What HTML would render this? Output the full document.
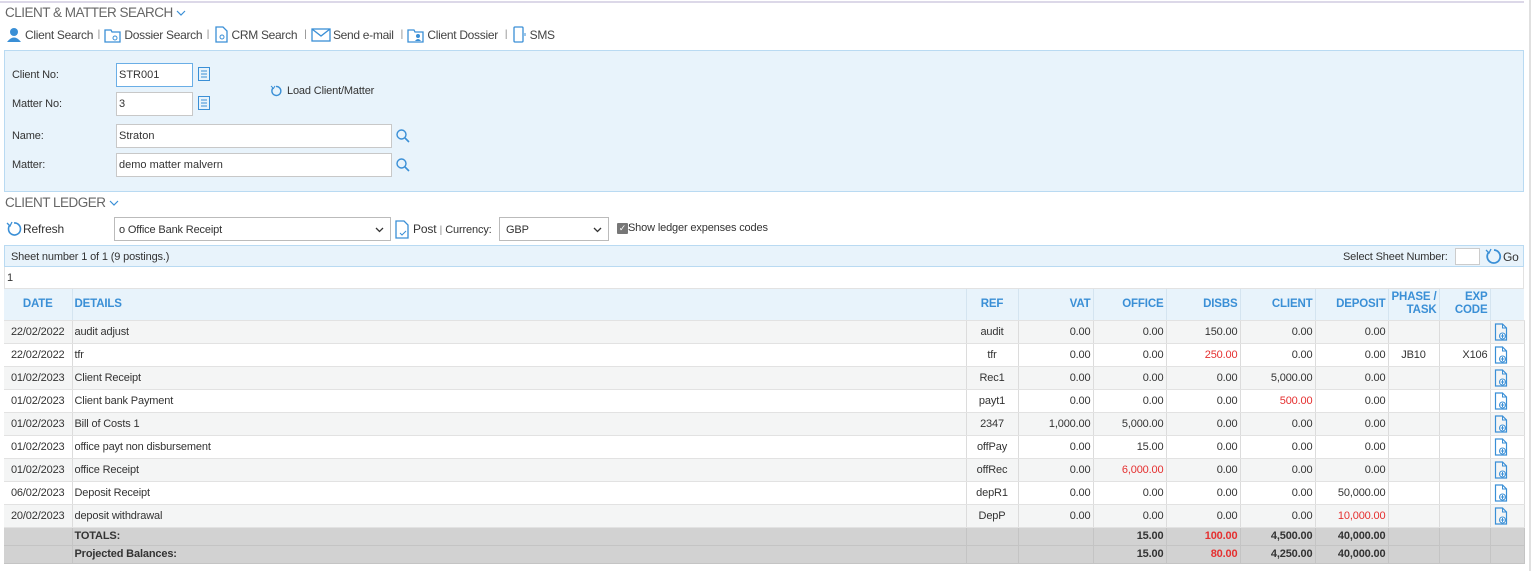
<!DOCTYPE html>
<html><head><meta charset="utf-8"><style>
*{box-sizing:border-box;margin:0;padding:0}
body{width:1536px;height:571px;background:#fff;font-family:"Liberation Sans",sans-serif;font-size:11px;color:#333;position:relative;overflow:hidden;letter-spacing:-0.15px}
.a{position:absolute}
.h{font-size:13.5px;color:#666;letter-spacing:-0.5px}
.chev{display:inline-block;vertical-align:middle;margin-left:3px}
.lnk{font-size:12px;color:#444;white-space:nowrap;letter-spacing:-0.3px}
.sep{color:#888;font-size:10px}
input.t{position:absolute;border:1px solid #c8c8c8;background:#fff;height:24px;font:11px "Liberation Sans",sans-serif;padding-left:2px;color:#333}
table{border-collapse:collapse;table-layout:fixed;position:absolute;left:4px;top:289px;width:1520px}
td,th{border-right:1px solid #dcdcdc;border-bottom:1px solid #e2e2e2;height:23px;padding:0 2px;text-align:right;white-space:nowrap;font-size:11px}
th{height:31px;color:#3a8fd6;font-size:11.5px;background:#e8f3fb;border-right:1px solid #d4e4f0;line-height:13px}
tr.g td{background:#f4f5f5}
tr.tot td{background:#d2d2d2;height:18px;font-weight:bold;border-color:#c4c4c4}
.r{color:#e53030}
.l{text-align:left}
.c{text-align:center}
</style></head><body>
<div class="a" style="left:0;top:0;width:1524px;height:3px;border-bottom:2px solid #dcd8e8"></div>
<div class="a" style="left:1529px;top:0;width:2px;height:571px;background:#e0e0e0"></div>

<div class="a h" style="left:5px;top:5px">CLIENT &amp; MATTER SEARCH<svg class="chev" width="10" height="8"><path d="M1 2l4 4 4-4" fill="none" stroke="#3a8fd6" stroke-width="1.2"/></svg></div>
<div class="a lnk" style="left:6px;top:26px;display:flex;align-items:center;gap:2px">
<svg width="17" height="16"><circle cx="8" cy="5" r="4" fill="#3a8fd6"/><path d="M1 15 Q8 6 15 15Z" fill="#3a8fd6"/></svg>Client Search <span class="sep">&nbsp;|&nbsp;</span>
<svg width="18" height="16"><path d="M1 3h6l1 2h8v10H1z" fill="none" stroke="#3a8fd6" stroke-width="1.3"/><circle cx="11" cy="11" r="2" fill="none" stroke="#3a8fd6"/></svg>Dossier Search <span class="sep">&nbsp;|&nbsp;</span>
<svg width="16" height="17"><path d="M2 1h7l4 4v11H2z" fill="none" stroke="#3a8fd6" stroke-width="1.3"/><circle cx="8" cy="11" r="2" fill="none" stroke="#3a8fd6"/></svg>CRM Search <span class="sep">&nbsp;&nbsp;|&nbsp;</span>
<svg width="20" height="15"><rect x="1" y="2" width="18" height="12" fill="none" stroke="#3a8fd6" stroke-width="1.3"/><path d="M1 2l9 7 9-7" fill="none" stroke="#3a8fd6" stroke-width="1.3"/></svg>Send e-mail <span class="sep">&nbsp;&nbsp;|&nbsp;</span>
<svg width="18" height="16"><path d="M1 3h6l1 2h8v10H1z" fill="none" stroke="#3a8fd6" stroke-width="1.3"/><circle cx="11" cy="9" r="2" fill="#3a8fd6"/><path d="M8 14q3-4 6 0z" fill="#3a8fd6"/></svg>Client Dossier <span class="sep">&nbsp;&nbsp;|&nbsp;</span>
<svg width="16" height="17"><rect x="2" y="1" width="9" height="15" rx="1" fill="none" stroke="#3a8fd6" stroke-width="1.3"/><path d="M13 7v3" stroke="#3a8fd6"/></svg>SMS
</div>

<div class="a" style="left:4px;top:50px;width:1520px;height:142px;background:#e8f3fb;border:1px solid #b9daf2"></div>
<div class="a" style="left:12px;top:69px">Client No:</div>
<div class="a" style="left:12px;top:98px">Matter No:</div>
<div class="a" style="left:12px;top:130px">Name:</div>
<div class="a" style="left:12px;top:159px">Matter:</div>
<input class="t" style="left:116px;top:63px;width:77px;border-color:#6aaee6" value="STR001">
<input class="t" style="left:116px;top:92px;width:77px" value="3">
<input class="t" style="left:116px;top:124px;width:276px" value="Straton">
<input class="t" style="left:116px;top:153px;width:276px" value="demo matter malvern">
<svg class="a" style="left:198px;top:67px" width="12" height="14"><rect x="0.5" y="0.5" width="11" height="13" fill="none" stroke="#3a8fd6"/><path d="M3 4h6M3 7h6M3 10h6" stroke="#3a8fd6"/></svg>
<svg class="a" style="left:198px;top:96px" width="12" height="14"><rect x="0.5" y="0.5" width="11" height="13" fill="none" stroke="#3a8fd6"/><path d="M3 4h6M3 7h6M3 10h6" stroke="#3a8fd6"/></svg>
<svg class="a" style="left:396px;top:129px" width="14" height="14"><circle cx="5.5" cy="5.5" r="4.5" fill="none" stroke="#3a8fd6" stroke-width="1.4"/><path d="M9 9l4 4" stroke="#3a8fd6" stroke-width="1.6"/></svg>
<svg class="a" style="left:396px;top:158px" width="14" height="14"><circle cx="5.5" cy="5.5" r="4.5" fill="none" stroke="#3a8fd6" stroke-width="1.4"/><path d="M9 9l4 4" stroke="#3a8fd6" stroke-width="1.6"/></svg>
<div class="a" style="left:270px;top:85px;display:flex;align-items:center;gap:5px"><svg width="12" height="12"><path d="M3 3A4.5 4.5 0 1 0 6 1.5" fill="none" stroke="#3a8fd6" stroke-width="1.4"/><path d="M1 1l2.5 2.5L5 1" fill="none" stroke="#3a8fd6"/></svg>Load Client/Matter</div>

<div class="a h" style="left:5px;top:195px">CLIENT LEDGER<svg class="chev" width="10" height="8"><path d="M1 2l4 4 4-4" fill="none" stroke="#3a8fd6" stroke-width="1.2"/></svg></div>
<div class="a" style="left:6px;top:221px;display:flex;align-items:center;gap:1px;font-size:12px"><svg width="16" height="16"><path d="M4 4A6 6 0 1 0 8 2" fill="none" stroke="#3a8fd6" stroke-width="1.6"/><path d="M1 2l3 3 2-4" fill="none" stroke="#3a8fd6" stroke-width="1.3"/></svg>Refresh</div>
<div class="a" style="left:114px;top:217px;width:277px;height:24px;border:1px solid #bbb;background:#fff;padding:6px 4px;">o Office Bank Receipt<svg style="position:absolute;right:6px;top:9px" width="9" height="6"><path d="M1 1l3.5 3.5L8 1" fill="none" stroke="#333" stroke-width="1.3"/></svg></div>
<svg class="a" style="left:394px;top:220px" width="16" height="20"><path d="M2 1h8l4 4v13H2z" fill="none" stroke="#3a8fd6" stroke-width="1.3"/><path d="M6 13l2 2 4-4" fill="none" stroke="#3a8fd6"/></svg>
<div class="a" style="left:413px;top:222px;font-size:12px">Post <span class="sep">|</span> <span style="font-size:11px">Currency:</span></div>
<div class="a" style="left:499px;top:217px;width:110px;height:24px;border:1px solid #bbb;background:#fff;padding:6px 6px">GBP<svg style="position:absolute;right:6px;top:9px" width="9" height="6"><path d="M1 1l3.5 3.5L8 1" fill="none" stroke="#333" stroke-width="1.3"/></svg></div>
<div class="a" style="left:617px;top:223px;width:11px;height:11px;background:#777;border-radius:1px;color:#fff;font-size:9px;line-height:11px;text-align:center">&#10003;</div>
<div class="a" style="left:628px;top:222px">Show ledger expenses codes</div>

<div class="a" style="left:4px;top:245px;width:1520px;height:22px;background:#e8f3fb;border:1px solid #b9daf2"></div>
<div class="a" style="left:11px;top:251px">Sheet number 1 of 1 (9 postings.)</div>
<div class="a" style="left:1343px;top:251px">Select Sheet Number:</div>
<div class="a" style="left:1455px;top:248px;width:25px;height:17px;background:#fff;border:1px solid #ccc"></div>
<svg class="a" style="left:1485px;top:248px" width="17" height="17"><path d="M4 4A6.5 6.5 0 1 0 9 2" fill="none" stroke="#3a8fd6" stroke-width="1.8"/><path d="M1 2l3 3 2-4" fill="none" stroke="#3a8fd6" stroke-width="1.3"/></svg>
<div class="a" style="left:1503px;top:250px;font-size:12px">Go</div>
<div class="a" style="left:4px;top:267px;width:1520px;height:22px;border:1px solid #e2e2e2;border-top:none"></div>
<div class="a" style="left:7px;top:272px">1</div>

<table>
<colgroup><col style="width:68px"><col style="width:894px"><col style="width:52px"><col style="width:75px"><col style="width:73px"><col style="width:74px"><col style="width:75px"><col style="width:73px"><col style="width:51px"><col style="width:51px"><col style="width:34px"></colgroup>
<tr><th class="c">DATE</th><th class="l">DETAILS</th><th class="c">REF</th><th>VAT</th><th>OFFICE</th><th>DISBS</th><th>CLIENT</th><th>DEPOSIT</th><th>PHASE /<br>TASK</th><th>EXP<br>CODE</th><th style="border-right:none"></th></tr>
<tr class="g"><td class="c">22/02/2022</td><td class="l">audit adjust</td><td class="c">audit</td><td>0.00</td><td>0.00</td><td>150.00</td><td>0.00</td><td>0.00</td><td></td><td></td><td class="l">D</td></tr>
<tr><td class="c">22/02/2022</td><td class="l">tfr</td><td class="c">tfr</td><td>0.00</td><td>0.00</td><td class="r">250.00</td><td>0.00</td><td>0.00</td><td class="c">JB10</td><td>X106</td><td class="l">D</td></tr>
<tr class="g"><td class="c">01/02/2023</td><td class="l">Client Receipt</td><td class="c">Rec1</td><td>0.00</td><td>0.00</td><td>0.00</td><td>5,000.00</td><td>0.00</td><td></td><td></td><td class="l">D</td></tr>
<tr><td class="c">01/02/2023</td><td class="l">Client bank Payment</td><td class="c">payt1</td><td>0.00</td><td>0.00</td><td>0.00</td><td class="r">500.00</td><td>0.00</td><td></td><td></td><td class="l">D</td></tr>
<tr class="g"><td class="c">01/02/2023</td><td class="l">Bill of Costs 1</td><td class="c">2347</td><td>1,000.00</td><td>5,000.00</td><td>0.00</td><td>0.00</td><td>0.00</td><td></td><td></td><td class="l">D</td></tr>
<tr><td class="c">01/02/2023</td><td class="l">office payt non disbursement</td><td class="c">offPay</td><td>0.00</td><td>15.00</td><td>0.00</td><td>0.00</td><td>0.00</td><td></td><td></td><td class="l">D</td></tr>
<tr class="g"><td class="c">01/02/2023</td><td class="l">office Receipt</td><td class="c">offRec</td><td>0.00</td><td class="r">6,000.00</td><td>0.00</td><td>0.00</td><td>0.00</td><td></td><td></td><td class="l">D</td></tr>
<tr><td class="c">06/02/2023</td><td class="l">Deposit Receipt</td><td class="c">depR1</td><td>0.00</td><td>0.00</td><td>0.00</td><td>0.00</td><td>50,000.00</td><td></td><td></td><td class="l">D</td></tr>
<tr class="g"><td class="c">20/02/2023</td><td class="l">deposit withdrawal</td><td class="c">DepP</td><td>0.00</td><td>0.00</td><td>0.00</td><td>0.00</td><td class="r">10,000.00</td><td></td><td></td><td class="l">D</td></tr>
<tr class="tot"><td></td><td class="l">TOTALS:</td><td></td><td></td><td>15.00</td><td class="r">100.00</td><td>4,500.00</td><td>40,000.00</td><td></td><td></td><td></td></tr>
<tr class="tot"><td></td><td class="l">Projected Balances:</td><td></td><td></td><td>15.00</td><td class="r">80.00</td><td>4,250.00</td><td>40,000.00</td><td></td><td></td><td></td></tr>
</table>
<script>
document.querySelectorAll('td.l').forEach(function(td){if(td.textContent==='D'){td.innerHTML='<svg width="14" height="18" style="display:block;margin-left:1px"><path d="M1.5 1h7l4 4v12h-11z" fill="none" stroke="#3a8fd6" stroke-width="1.2"/><path d="M8.5 1v4h4" fill="none" stroke="#3a8fd6"/><circle cx="8.5" cy="13" r="3" fill="#fff" stroke="#3a8fd6"/><path d="M8.5 11v4M6.5 13h4" stroke="#3a8fd6"/></svg>';}});
</script>
</body></html>
